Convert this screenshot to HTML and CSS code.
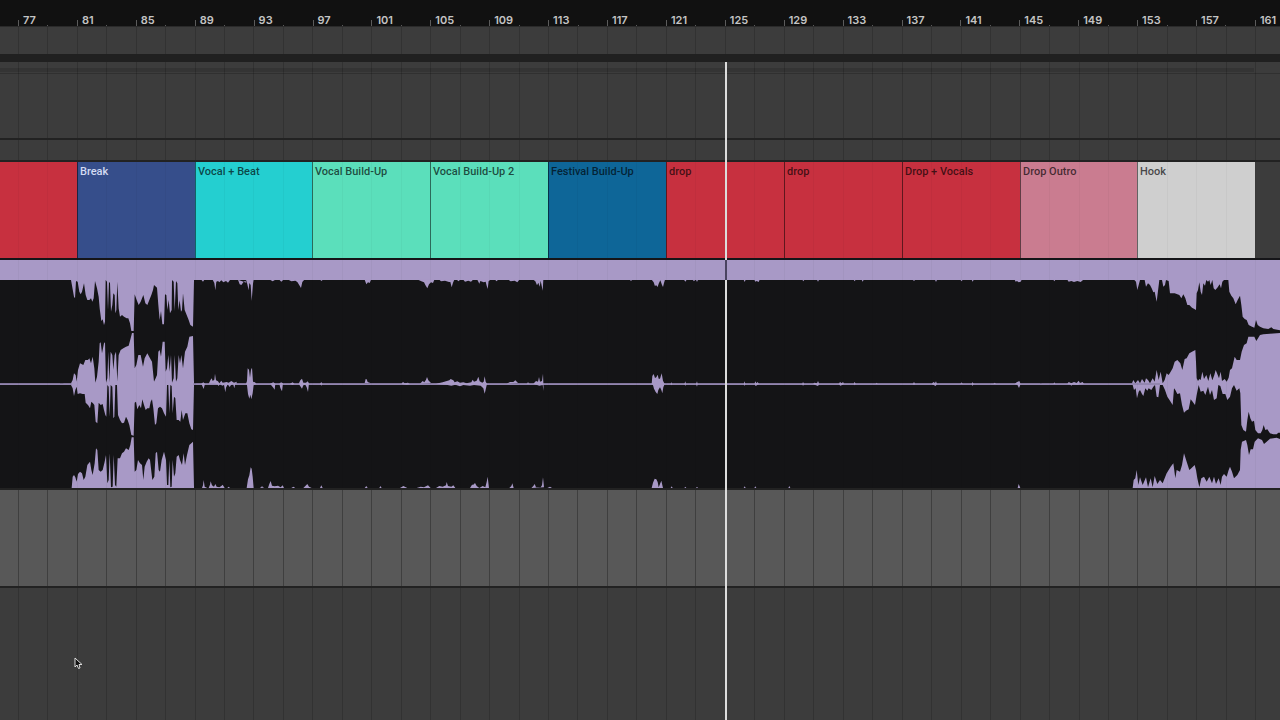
FILE: index.html
```html
<!DOCTYPE html>
<html lang="en">
<head>
  <meta charset="utf-8">
  <meta name="viewport" content="width=device-width, initial-scale=1">
  <title>Arrangement</title>
  <link rel="stylesheet" href="styles.css">
</head>
<body>

<svg class="defs" aria-hidden="true">
  <!-- one line every two bars -->
  <symbol id="bars" viewBox="0 0 2560 2" preserveAspectRatio="none">
    <path d="M37 0v2M95 0v2M155 0v2M213 0v2M273 0v2M331 0v2M391 0v2M449 0v2M507 0v2M567 0v2M625 0v2M685 0v2M743 0v2M803 0v2M861 0v2M921 0v2M979 0v2M1039 0v2M1097 0v2M1155 0v2M1215 0v2M1273 0v2M1333 0v2M1391 0v2M1451 0v2M1509 0v2M1569 0v2M1627 0v2M1687 0v2M1745 0v2M1805 0v2M1863 0v2M1923 0v2M1981 0v2M2041 0v2M2099 0v2M2159 0v2M2217 0v2M2275 0v2M2335 0v2M2393 0v2M2453 0v2M2511 0v2" fill="none" stroke="currentColor" stroke-width="2" shape-rendering="crispEdges"/>
  </symbol>
</svg>

<main class="arrangement">
  <div class="ruler">
    <span class="bar first"></span>
    <span class="bar">77</span>
    <span class="bar">81</span>
    <span class="bar">85</span>
    <span class="bar">89</span>
    <span class="bar">93</span>
    <span class="bar">97</span>
    <span class="bar">101</span>
    <span class="bar">105</span>
    <span class="bar">109</span>
    <span class="bar">113</span>
    <span class="bar">117</span>
    <span class="bar">121</span>
    <span class="bar">125</span>
    <span class="bar">129</span>
    <span class="bar">133</span>
    <span class="bar">137</span>
    <span class="bar">141</span>
    <span class="bar">145</span>
    <span class="bar">149</span>
    <span class="bar">153</span>
    <span class="bar">157</span>
    <span class="bar">161</span>
  </div>

  <div class="lane scrub">
    <svg class="grid-lines"><use href="#bars"/></svg>
  </div>
  <div class="divider"></div>

  <div class="tracks">
    <div class="lane group">
      <div class="group-strip"></div>
      <svg class="grid-lines"><use href="#bars"/></svg>
    </div>
    <div class="lane spacer">
      <svg class="grid-lines"><use href="#bars"/></svg>
    </div>

    <div class="lane clips">
      <div class="clip red"></div>
      <div class="clip navy">Break</div>
      <div class="clip cyan">Vocal + Beat</div>
      <div class="clip mint">Vocal Build-Up</div>
      <div class="clip mint">Vocal Build-Up 2</div>
      <div class="clip blue">Festival Build-Up</div>
      <div class="clip red">drop</div>
      <div class="clip red">drop</div>
      <div class="clip red">Drop + Vocals</div>
      <div class="clip pink">Drop Outro</div>
      <div class="clip white">Hook</div>
      <svg class="grid-lines"><use href="#bars"/></svg>
    </div>

    <div class="lane audio">
      <svg class="wave" viewBox="0 0 3840 684" preserveAspectRatio="none" role="img" aria-label="Waveform">
        <g fill="#141416">
          <path d="M0 60H190V370H0zM0 375H190V684H0zM583 60H3125V370H583zM583 375H3125V684H583z"/>
          <!-- break, left channel -->
          <path transform="translate(180 -15)" d="M0 75L33 75 42 125 45 130 48 78 53 80 58 110 62 118 66 110 72 85 77 120 82 135 88 135 93 130 97 140 101 130 105 78 111 100 116 125 119 160 124 198 128 193 132 210 135 200 137 75 141 80 144 165 147 80 150 85 153 170 157 150 160 115 164 120 166 175 169 165 172 80 176 160 180 185 186 180 192 185 200 190 205 190 210 205 214 228 221 228 224 118 230 135 236 150 242 140 250 120 256 145 262 150 268 135 274 120 279 105 282 90 291 98 295 150 299 195 303 168 307 208 312 208 315 118 319 120 322 165 326 135 330 175 335 165 336 75 341 80 344 168 348 78 352 85 355 165 359 135 363 170 366 165 369 115 374 165 380 180 386 195 391 210 399 215 402 75 406 75V385L402 385 399 243 388 245 382 275 375 290 369 340 364 300 360 325 356 300 352 370 348 380 344 300 341 370 336 383 333 300 329 350 325 300 321 340 317 350 314 260 308 260 303 305 299 285 295 290 291 360 287 370 282 380 276 320 270 310 262 295 254 310 249 335 242 300 235 300 229 330 224 340 221 234 216 234 212 250 206 272 198 275 190 280 182 285 176 300 172 380 168 290 164 300 160 345 157 300 152 290 148 383 145 290 142 370 138 383 135 262 132 265 126 295 122 262 119 265 116 320 111 365 106 383 103 340 98 305 93 325 88 310 84 315 76 315 70 330 60 325 54 345 50 380 47 360 42 355 38 375 33 385 0 385z"/>
          <!-- break, right channel -->
          <path transform="translate(180 330)" d="M0 45L33 45 38 55 42 78 46 60 50 50 53 72 60 70 68 72 74 72 77 98 84 105 90 115 94 95 99 100 103 105 107 155 112 160 116 98 122 105 128 102 132 120 136 135 139 140 142 45 146 50 149 140 152 45 157 50 160 145 163 140 166 45 171 45 174 135 180 150 186 160 192 158 198 140 203 150 208 165 214 195 221 197 224 98 228 95 232 118 238 105 243 115 247 88 252 105 257 120 262 115 268 115 272 95 276 88 280 115 285 165 289 160 294 115 300 110 306 115 312 130 318 140 321 45 325 45 328 130 331 45 335 48 338 130 342 80 346 85 350 150 356 150 361 155 365 120 369 150 376 130 382 130 388 160 394 178 399 180 402 45 406 45V354L402 354 399 215 394 220 388 225 381 255 375 285 371 250 366 285 360 270 356 255 350 260 346 310 342 320 338 270 335 350 331 352 328 270 325 345 321 345 318 270 312 245 305 270 300 305 296 300 291 245 287 250 283 320 277 330 270 270 266 265 260 275 254 290 250 330 246 285 240 280 234 270 229 300 224 305 221 202 215 202 211 225 206 240 198 235 192 245 186 250 180 265 173 265 169 350 165 345 161 255 158 350 153 352 149 250 146 330 142 340 138 255 134 275 128 300 122 305 116 300 112 240 108 235 104 280 98 315 94 300 90 275 82 285 76 320 71 330 66 310 60 305 54 312 50 335 46 322 42 315 38 320 35 354 0 354z"/>
          <!-- outro, left channel -->
          <path transform="translate(3360 -15)" d="M-240 75L43 75 48 80 52 105 56 90 60 75 74 75 78 95 84 85 90 90 95 100 100 112 104 110 110 140 115 100 118 75 126 75 130 95 135 90 138 75 146 78 150 115 158 115 164 115 172 118 178 120 184 130 190 118 196 130 202 150 208 150 216 158 223 162 228 165 230 115 234 105 238 82 242 110 246 120 250 85 255 92 259 75 264 80 268 75 272 90 277 75 281 100 286 105 292 98 299 88 303 100 307 80 312 75 325 75 328 110 334 122 340 130 347 148 353 135 360 122 364 150 368 185 374 192 380 195 386 210 396 215 403 218 408 195 413 210 420 215 430 220 445 222 454 217 460 222 480 226V234L450 236 430 238 420 240 409 258 403 245 396 245 385 245 380 265 372 270 365 290 360 315 350 315 344 305 336 340 330 345 326 368 320 380 314 372 306 378 302 350 297 370 291 355 287 345 283 360 277 376 271 355 265 378 259 360 252 372 247 350 242 375 238 372 234 378 230 370 228 320 226 285 216 290 208 295 200 310 194 312 187 345 181 325 172 315 164 320 158 340 152 350 146 360 140 355 134 375 128 385 122 350 116 375 110 345 104 380 98 370 90 385 84 375 78 370 74 383 66 372 60 385 54 375 46 385 40 375 36 385 -240 385z"/>
          <!-- outro, right channel -->
          <path transform="translate(3360 330)" d="M-240 45L38 45 42 60 47 55 51 85 56 65 60 60 66 72 70 78 76 55 82 62 86 55 94 60 100 50 105 45 110 80 115 82 120 45 128 45 135 60 142 80 150 92 158 105 162 55 166 60 172 72 180 70 186 105 192 128 198 122 206 118 212 88 218 95 225 105 230 75 236 45 242 65 250 62 256 75 264 50 270 75 276 60 282 90 290 85 295 45 301 48 308 72 316 72 322 90 330 80 336 55 342 45 350 62 358 55 361 70 364 165 370 180 378 185 382 150 386 125 391 145 396 155 402 152 406 180 414 190 422 190 427 180 431 165 436 180 442 178 450 190 460 193 470 193 475 188 480 188V207L470 203 450 206 440 215 432 222 426 210 414 205 404 215 399 238 392 238 387 255 382 225 378 210 366 215 362 240 360 300 352 315 342 325 336 305 330 290 326 300 320 320 312 312 306 320 302 345 296 325 288 342 282 320 276 340 268 320 260 335 252 320 244 325 238 352 232 325 228 300 224 285 214 295 208 300 200 275 192 250 186 285 180 305 170 300 166 325 160 280 152 290 146 300 140 310 134 325 128 340 120 330 112 342 104 318 98 352 92 325 84 352 78 322 68 345 60 322 55 345 50 300 46 325 41 330 38 354 -240 354z"/>
        </g>
        <path d="M0 372H215M580 372H3480" stroke="#7f759a" stroke-width="3"/>
        <!-- small dips along the loud part -->
        <g fill="#a899c6">
          <path transform="translate(570 -15)" d="M34 74l5 6 4-6zM68 74l5 10 3 22 3-26 5-2 4 4 6-6 6 6 8-4 6 5 6-8zM144 74l5 14 5 2 6-8 6-5 3 6zM168 74l4 14 4 18 2-22 4 6 3 48 4-52 2-12zM240 74l8 5 8-5zM268 74l6 6 6-6zM295 74l9 5 12-2 6 4 6 10 5 8 4-18 6-7zM390 74l5 4 3-4zM524 74l5 14 5-6 5 2 4-10zM684 74l10 5 8 3 4 8 6 10 5-12 6-6 6 2 4-10zM748 74l5 5 12-2 12 4 4 0 4 16 4-14 4-9zM800 74l6 5 4-5zM820 74l5 6 10-3 8 3 6-6zM862 74l6 12 3-8 10 4 6-2 3 12 3 10 3-24 6-4zM915 74l5 5 4-5zM955 74l7 5 12-2 8 5 6-8zM1030 74l6 5 5 12 4-8 4 12 3-18 6 30 2-33z"/>
          <path transform="translate(570 -15)" d="M34 386l6-4 5 4-4 16zM56 386l5-10 4-6 3 8 5-4 2-18 3 20 6 3 4 6 6-8 4 6 12-2 6 2 8-5 8 5 8-3v6l-4 0-3 14-4-14-6 4-4 6-6-8-5 10-2 14-4-22-6 2-6-8-4 10-3-6-8-2zM168 386l3-8 2-38 4 4 3 24 3-24 3-6 3 42 6 2 4 5-8 4-3 24-4 18-3-14-3 12-4-14-3-26zM240 386l10-4 6 4-2 18-4-6zM268 386l5-4 6 3-3 24-5-10zM300 386l8-4 5 4-5 4zM326 386l5-10 5-5 4 12 8 0 5-4 4 6-3 26-4-14-4-8-6 2-4 10zM390 386l4-5 3 5-3 6zM524 384l3-12 3 1 3 8 8 3zM634 386l5-5 5 4 10-2 6 5-10 2zM690 386l8-8 5 4 5-8 3-8 4 10 8 8zM738 386l20-4 20-6 4-4 8 4 4 6 8-3 8 4 10-1 10 3 14-3 4-8 4 6 8-3 5-12 4 14 8 4 4-3 3-16 3 16 4 6-5 22-2 8-4-16-8-8-20-2-12 2-20-2-10 4-14-5-12 3-15-3zM950 386l10-5 10 0 6-5 8 8zM1010 386l4-4 5 4zM1030 386l8-8 6 2 3-14 3 14 6-2 3-22 2 52-3-18-10 2z"/>
          <path transform="translate(570 330)" d="M36 354l3-8 2-16 3 20 8 4zM56 354l4-10 2-10 4 12 6 4 4-8 4 8 8 2 6-4 4-4 6 10zM112 354l4-4 4 4zM170 354l4-26 4-12 4-24 3 4 3 24 3 34zM210 354l6-5 6 4zM234 354l4-12 4-9 4 14 8 2 10-2 8 5 6-6 4 8zM304 354l6-4 6 4zM340 354l6-6 6-6 5 8 8 4zM390 354l4-8 4 8zM524 354l5-6 4 6zM568 354l3-6 4 6zM630 354l10-6 12 6zM680 354l12-4 10 2 12-6 8 8zM738 354l10-6 10 2 10-4 2-10 4 12 10 2 6-4 6 8zM840 354l6-10 4 0 5-5 5 9 8 6 10-6 8 4 4-16 3-16 4 34zM958 354l6-6 3-8 4 14zM1024 354l6-6 4-6 4 10 14 0 4-6 3-24 3 30zM1072 354l8-4 6 4z"/>
          <path transform="translate(1800 -60)" d="M155 119l6 8 4 12 3-4 5 6 3-10 5-10 5 14 3 6 3-12 3-10zM90 119l3 5 3-5zM252 119l4 6 4-6zM278 119l4 5 4-5zM288 119l3 7 3-7zM431 119l3 7 3-7zM463 119l3 6 4-2 6 3 3-7zM155 432l2-24 4-6 4 12 4-2 4-8 3 12 4 0 5-16 4 22 5 10-4 10-3 18-3-10-4-8-5 8-3 12-5-6-5-10-3-10zM212 432l2-6 2 6-2 4zM253 432l3-8 2 8-2 6zM288 432l3-8 2 8-2 8zM431 432l3-8 2 8-2 6zM463 432l3-8 3 6 4-4 4 6-10 6zM155 744l4-16 5-12 5 2 4 8 3 16 4-10 4-10 5 22zM212 744l3-5 3 5zM253 744l3-4 3 4zM288 744l3-4 3 4zM431 744l3-5 3 5zM463 744l3-5 3 5zM565 744l3-6 3 6z"/>
          <path transform="translate(2340 -330)" d="M67 389l3 5 3-5zM111 389l3 6 3-6zM221 389l3 5 3-5zM245 389l3 6 3-6zM399 389l3 5 3-5zM465 389l3 7 3-7zM541 389l4 5 3-5zM575 389l3 6 3-6zM704 389l3 6 4-2 5 4 6-2 3-6zM820 389l3 5 3-5zM862 389l4 6 8-2 8 3 10-3 10 3 8-7zM67 702l2-7 3 7-3 6zM98 702l5-4 8 2 3-7 4 9-4 6zM176 702l4-6 5 4 4-4 4 6-12 5zM221 702l3-7 3 7-3 4zM287 702l3-4 3 4zM399 702l3-7 3 7-3 4zM455 702l5-6 5 3 3-5 3 8-4 6zM541 702l4-5 3 5zM575 702l3-6 3 6-3 6zM640 702l4-4 4 4zM704 702l6-5 8-4 4 9-5 12-5-10zM820 702l3-5 3 5zM862 702l4-6 8 4 8-4 8 3 6-7 4 7 8-3 4 6-20 3z"/>
          <path d="M3053 684l3-12 5 12zM3210 373l4-4 4 4-4 4z"/>
        </g>
      </svg>
      <svg class="grid-lines"><use href="#bars"/></svg>
    </div>

    <div class="lane selected">
      <svg class="grid-lines"><use href="#bars"/></svg>
    </div>
    <div class="lane empty">
      <svg class="grid-lines"><use href="#bars"/></svg>
    </div>

    <div class="playhead"></div>
  </div>

  <svg class="cursor" viewBox="0 0 18 26" aria-hidden="true">
    <path d="M2 2V20L6 16L9 23L12 22L10 15H16Z" fill="#111" stroke="#ddd" stroke-width="2" stroke-linejoin="round"/>
  </svg>
</main>

</body>
</html>
```
FILE: styles.css
```css
* {
  box-sizing: border-box;
}

body {
  margin: 0;
  background-color: #3c3c3c;
  font-family: Inter, "Liberation Sans", sans-serif;
  font-size: 11px;
  overflow: hidden;
}

.defs {
  display: none;
}

.arrangement {
  position: relative;
  display: flex;
  flex-direction: column;
  min-height: 100vh;
}

/* ruler */
.ruler {
  display: grid;
  grid-template-columns: 180fr repeat(21, 589fr) 251fr;
  height: 27px;
  padding-top: 13px;
  background-color: #111111;
  border-bottom: 1px solid #2a2a2a;
  overflow: hidden;
}

.bar {
  position: relative;
  min-width: 0;
  padding-left: 5px;
  color: #c4c4c4;
  font-weight: 600;
  line-height: 14px;
  white-space: nowrap;
}

.bar::before,
.bar::after {
  content: "";
  position: absolute;
  bottom: 0;
  left: 0;
  width: 1px;
  height: 7px;
  background-color: #5c5c5c;
}

.bar::after {
  left: 50%;
  height: 2px;
}

.bar.first::before,
.bar.first::after,
.bar:last-child::after {
  display: none;
}

/* lanes */
.lane {
  position: relative;
  background-color: #3c3c3c;
  border-bottom: 2px solid #222222;
}

.grid-lines {
  position: absolute;
  top: 0;
  left: 0;
  width: 100%;
  height: 100%;
  color: rgba(0, 0, 0, 0.16);
  pointer-events: none;
}

.scrub {
  height: 27px;
  border-bottom: none;
}

.divider {
  height: 8px;
  background-color: #202020;
}

.tracks {
  position: relative;
  display: flex;
  flex: 1;
  flex-direction: column;
}

.group {
  height: 78px;
  padding-top: 6px;
}

.group::after {
  content: "";
  display: block;
  height: 1px;
  margin-top: 1px;
  background-color: #303030;
}

.group-strip {
  width: 98%;
  height: 4px;
  background-color: #343434;
}

.spacer {
  height: 22px;
}

.clips {
  display: grid;
  grid-template-columns: 77fr 118fr 117fr 118fr 118fr 118fr 118fr 118fr 118fr 117fr 118fr 25fr;
  height: 98px;
  border-bottom-color: #151518;
}

.clips .grid-lines,
.audio .grid-lines {
  color: rgba(0, 0, 0, 0.03);
}

.clip {
  min-width: 0;
  padding: 3px 2px;
  border-left: 1px solid rgba(0, 0, 0, 0.5);
  color: rgba(0, 0, 0, 0.68);
  font-family: Roboto, "Liberation Sans", sans-serif;
  font-weight: 500;
  line-height: 14px;
  white-space: nowrap;
  overflow: hidden;
}

.clip:first-child {
  border-left: none;
}

.red {
  background-color: #c7303f;
}

.navy {
  background-color: #364e8b;
  color: #d3dbf2;
}

.cyan {
  background-color: #24cfd0;
}

.mint {
  background-color: #5bdfbb;
}

.blue {
  background-color: #0e6698;
}

.pink {
  background-color: #ca7c90;
}

.white {
  background-color: #cfcfcf;
}

.audio {
  height: 230px;
  background-color: #a899c6;
}

.wave {
  display: block;
  width: 100%;
  height: 228px;
}

.selected {
  height: 98px;
  background-color: #585858;
}

.selected .grid-lines {
  color: rgba(0, 0, 0, 0.28);
}

.empty {
  flex: 1;
  border-bottom: none;
}

/* playhead turns dark where it crosses the audio clip header */
.playhead {
  position: absolute;
  top: 0;
  bottom: 0;
  left: 56.65%;
  width: 2px;
  background: linear-gradient(#dcdcdc 198px, #4a4360 198px, #4a4360 218px, #dcdcdc 218px);
}

.cursor {
  position: absolute;
  top: 657px;
  left: 74px;
  width: 9px;
  height: 13px;
}
```
